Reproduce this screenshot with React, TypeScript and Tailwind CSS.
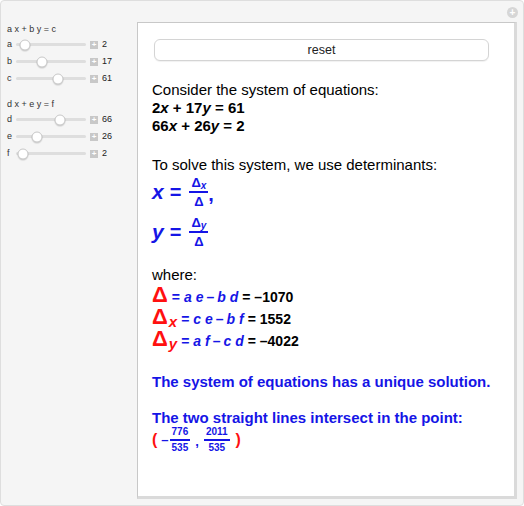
import React from 'react';

const font = { fontFamily: '"Liberation Sans", Arial, sans-serif' };

interface SliderRowProps {
  label: string;
  value: number;
  pos: number; // thumb centre, px from track start
}

const SliderRow = ({ label, value, pos }: SliderRowProps) => (
  <div className="flex items-center h-[17px]">
    <span className="w-[15px] pl-[6px] text-[9px] text-[#333]">{label}</span>
    <div className="relative w-[70px] h-[3px] bg-[#dedede] rounded-full">
      <div
        className="absolute top-1/2 -translate-y-1/2 -translate-x-1/2 w-[11px] h-[11px] rounded-full bg-white border border-[#c8c8c8] shadow-[0_1px_1px_rgba(0,0,0,0.15)]"
        style={{ left: pos }}
      />
    </div>
    <span className="ml-[4px] w-[8px] h-[8px] bg-[#c8c8c8] flex items-center justify-center text-white text-[8px] leading-none font-bold">
      +
    </span>
    <span className="ml-[4px] text-[9px] text-[#222]">{value}</span>
  </div>
);

const Frac = ({ num, den, className = '' }: { num: React.ReactNode; den: React.ReactNode; className?: string }) => (
  <span className={`inline-flex flex-col items-center align-middle leading-none ${className}`}>
    <span className="px-[2px]">{num}</span>
    <span className="self-stretch h-[2px] bg-[#1515e6] my-[2px]" />
    <span className="px-[2px]">{den}</span>
  </span>
);

interface DetRowProps {
  sub?: string;
  lhs: string;
  rhs: string;
  result: string;
}

const DetRow = ({ sub, lhs, rhs, result }: DetRowProps) => (
  <div className="flex items-baseline h-[22px] leading-[16px]">
    <span className="text-[#ff1010] text-[22px] leading-[16px]">Δ</span>
    {sub && <i className="text-[#ff1010] text-[15px] leading-[12px] relative top-[3px] ml-[1px]">{sub}</i>}
    <span className="text-[#1515e6] ml-[4px]">=</span>
    <i className="text-[#1515e6] ml-[4px]">{lhs}</i>
    <span className="text-[#1515e6] ml-[3px]">–</span>
    <i className="text-[#1515e6] ml-[3px]">{rhs}</i>
    <span className="ml-[4px]">= {result}</span>
  </div>
);

export default function App() {
  return (
    <div
      className="relative w-[524px] h-[506px] bg-[#f5f5f5] border border-[#dedede] rounded-[4px] overflow-hidden"
      style={font}
    >
      {/* close icon */}
      <div className="absolute right-[5px] top-[6px] w-[11px] h-[11px] rounded-full bg-[#d6d6d6] flex items-center justify-center text-white text-[10px] leading-none font-bold">
        +
      </div>

      <div className="flex">
        {/* Controls */}
        <div className="w-[136px] pt-[22px]">
          <div className="pl-[6px] text-[9px] text-[#333] h-[13px] leading-[13px]">a x + b y = c</div>
          <SliderRow label="a" value={2} pos={9} />
          <SliderRow label="b" value={17} pos={26} />
          <SliderRow label="c" value={61} pos={42} />
          <div className="pl-[6px] text-[9px] text-[#333] h-[13px] leading-[13px] mt-[11px]">d x + e y = f</div>
          <SliderRow label="d" value={66} pos={44} />
          <SliderRow label="e" value={26} pos={21} />
          <SliderRow label="f" value={2} pos={7} />
        </div>

        {/* Output panel */}
        <div className="mt-[21px] w-[380px] h-[477px] bg-white border-l border-t border-[#c8c8c8] border-r-[3px] border-b-[3px] border-r-[#dadada] border-b-[#dadada]">
          <button className="mt-[16px] ml-[16px] w-[335px] h-[22px] rounded-[6px] border border-[#d4d4d4] bg-white text-[12.5px] text-[#222] shadow-[0_1px_1px_rgba(0,0,0,0.06)]">
            reset
          </button>

          <div className="pl-[14px] text-[15px] leading-[18px] text-black mt-[20px]">
            <div>Consider the system of equations:</div>
            <div className="font-bold">
              2<i>x</i> + 17<i>y</i> = 61
            </div>
            <div className="font-bold">
              66<i>x</i> + 26<i>y</i> = 2
            </div>

            <div className="mt-[21px]">To solve this system, we use determinants:</div>

            <div className="text-[#1515e6] font-bold">
              <div className="flex items-center h-[36px]">
                <i className="text-[21px]">x</i>
                <span className="text-[20px] ml-[6px] mr-[8px]">=</span>
                <Frac
                  className="text-[13px]"
                  num={<>Δ<i className="text-[10px] relative top-[2px]">x</i></>}
                  den="Δ"
                />
                <span className="text-[20px] mt-[4px]">,</span>
              </div>
              <div className="flex items-center h-[36px] mt-[4px]">
                <i className="text-[21px]">y</i>
                <span className="text-[20px] ml-[6px] mr-[8px]">=</span>
                <Frac
                  className="text-[13px]"
                  num={<>Δ<i className="text-[10px] relative top-[2px]">y</i></>}
                  den="Δ"
                />
              </div>
            </div>

            <div className="mt-[16px]">where:</div>

            <div className="font-bold text-[14px] pt-[3px]">
              <DetRow lhs="a e" rhs="b d" result="–1070" />
              <DetRow sub="x" lhs="c e" rhs="b f" result="1552" />
              <DetRow sub="y" lhs="a f" rhs="c d" result="–4022" />
            </div>

            <div className="mt-[20px] font-bold text-[#1515e6]">The system of equations has a unique solution.</div>

            <div className="mt-[18px] font-bold text-[#1515e6]">The two straight lines intersect in the point:</div>
            <div className="flex items-center font-bold h-[26px]">
              <span className="text-[#ff1010] text-[16px]">(</span>
              <span className="text-[#1515e6] text-[13px] ml-[4px] mr-[1px]">–</span>
              <Frac className="text-[10px] text-[#1515e6]" num="776" den="535" />
              <span className="text-[#1515e6] text-[13px] mx-[5px] mt-[4px]">,</span>
              <Frac className="text-[10px] text-[#1515e6]" num="2011" den="535" />
              <span className="text-[#ff1010] text-[16px] ml-[6px]">)</span>
            </div>
          </div>
        </div>
      </div>
    </div>
  );
}
